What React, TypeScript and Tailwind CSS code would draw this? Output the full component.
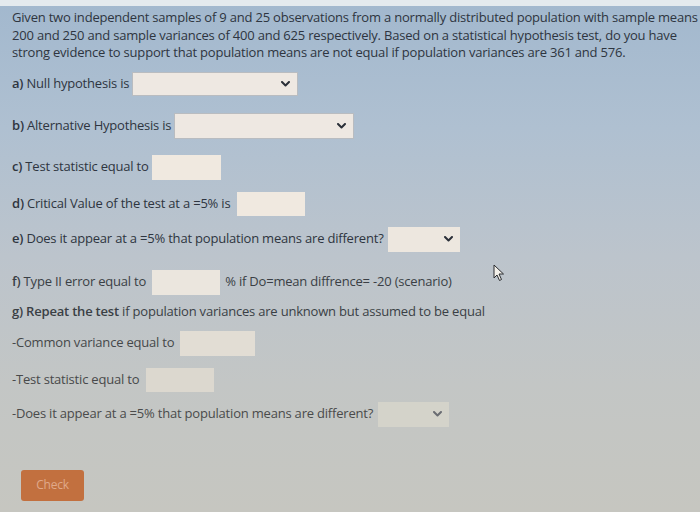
import React from "react";

const Chevron = ({ color = "#2a2f38" }: { color?: string }) => (
  <svg width="9" height="6" viewBox="0 0 9 6" className="shrink-0">
    <path d="M1 1 L4.5 4.5 L8 1" fill="none" stroke={color} strokeWidth="2" strokeLinecap="round" strokeLinejoin="round" />
  </svg>
);

const Select = ({ w, h, bg, chev, extra = "" }: { w: string; h: string; bg: string; chev?: string; extra?: string }) => (
  <div className={`${w} ${h} ${bg} ${extra} flex items-center justify-end pr-[7px] border border-[#b9bcc0]`}>
    <Chevron color={chev} />
  </div>
);

export default function App() {
  return (
    <div
      className="relative w-[700px] h-[512px] overflow-hidden bg-[linear-gradient(180deg,#a2b8ce_0%,#afc0d1_25%,#bcc4cc_50%,#c3c6c5_75%,#c6c6c0_100%)] text-[13px] tracking-[-0.2px] text-[#2e3540]"
      style={{ fontFamily: '"Open Sans", sans-serif' }}
    >
      <div className="h-[6px] bg-[#e4eaee]" />
      <div className="pl-[12px] pt-[3px] leading-[17.5px] whitespace-nowrap">
        <div>Given two independent samples of 9 and 25 observations from a normally distributed population with sample means of</div>
        <div>200 and 250 and sample variances of 400 and 625 respectively. Based on a statistical hypothesis test, do you have</div>
        <div>strong evidence to support that population means are not equal if population variances are 361 and 576.</div>
      </div>

      <div className="pl-[12px] whitespace-nowrap">
        <div className="mt-[10px] flex items-center h-[24px]">
          <span><b className="font-semibold">a)</b> Null hypothesis is</span>
          <Select w="w-[166px] ml-[3px]" h="h-[24px]" bg="bg-[#eee8e2]" />
        </div>

        <div className="mt-[17px] flex items-center h-[26px]">
          <span><b className="font-semibold">b)</b> Alternative Hypothesis is</span>
          <Select w="w-[180px] ml-[3px]" h="h-[26px]" bg="bg-[#eee8e2]" />
        </div>

        <div className="mt-[16px] flex items-center h-[25px]">
          <span><b className="font-semibold">c)</b> Test statistic equal to</span>
          <div className="ml-[3px] w-[69px] h-[25px] bg-[#f0e9e0]" />
        </div>

        <div className="mt-[12px] flex items-center h-[24px]">
          <span><b className="font-semibold">d)</b> Critical Value of the test at a =5% is</span>
          <div className="ml-[7px] w-[68px] h-[24px] bg-[#f0e9e0]" />
        </div>

        <div className="mt-[11px] flex items-center h-[25px]">
          <span><b className="font-semibold">e)</b> Does it appear at a =5% that population means are different?</span>
          <div className="ml-[4px] w-[72px] h-[25px] bg-[#ede7df] flex items-center justify-end pr-[7px]">
            <Chevron />
          </div>
        </div>

        <div className="mt-[18px] flex items-center h-[25px] text-[#3a3f45]">
          <span><b className="font-semibold">f)</b> Type II error equal to</span>
          <div className="ml-[6px] w-[68px] h-[25px] bg-[#ebe6de]" />
          <span className="ml-[5px]">% if Do=mean diffrence= -20 (scenario)</span>
        </div>

        <div className="mt-[7px] flex items-center h-[20px] text-[#3a3f45]">
          <span><b className="font-semibold">g) Repeat the test</b> if population variances are unknown but assumed to be equal</span>
        </div>

        <div className="mt-[9px] flex items-center h-[25px] text-[#45484a]">
          <span>-Common variance equal to</span>
          <div className="ml-[6px] w-[75px] h-[25px] bg-[#e2ddd4]" />
        </div>

        <div className="mt-[12px] flex items-center h-[24px] text-[#48494a]">
          <span>-Test statistic equal to</span>
          <div className="ml-[7px] w-[68px] h-[24px] bg-[#dcd8cf]" />
        </div>

        <div className="mt-[10px] flex items-center h-[25px] text-[#4a4b4b]">
          <span>-Does it appear at a =5% that population means are different?</span>
          <div className="ml-[5px] w-[71px] h-[25px] bg-[#d4d3ca] flex items-center justify-end pr-[7px]">
            <Chevron color="#6a6c72" />
          </div>
        </div>

        <div className="mt-[43px] ml-[9px]">
          <div className="w-[63px] h-[31px] rounded-[3px] bg-[#c2703f] text-[#e0a98a] flex items-center justify-center text-[12px]">
            Check
          </div>
        </div>
      </div>

      <svg className="absolute left-[493px] top-[264px]" width="12" height="18" viewBox="0 0 12 18">
        <path d="M1 1 L1 14 L4 11 L6.5 16.5 L8.5 15.5 L6 10 L10.5 10 Z" fill="#f4f1ea" stroke="#2a2c30" strokeWidth="1" strokeLinejoin="round" />
      </svg>
    </div>
  );
}
